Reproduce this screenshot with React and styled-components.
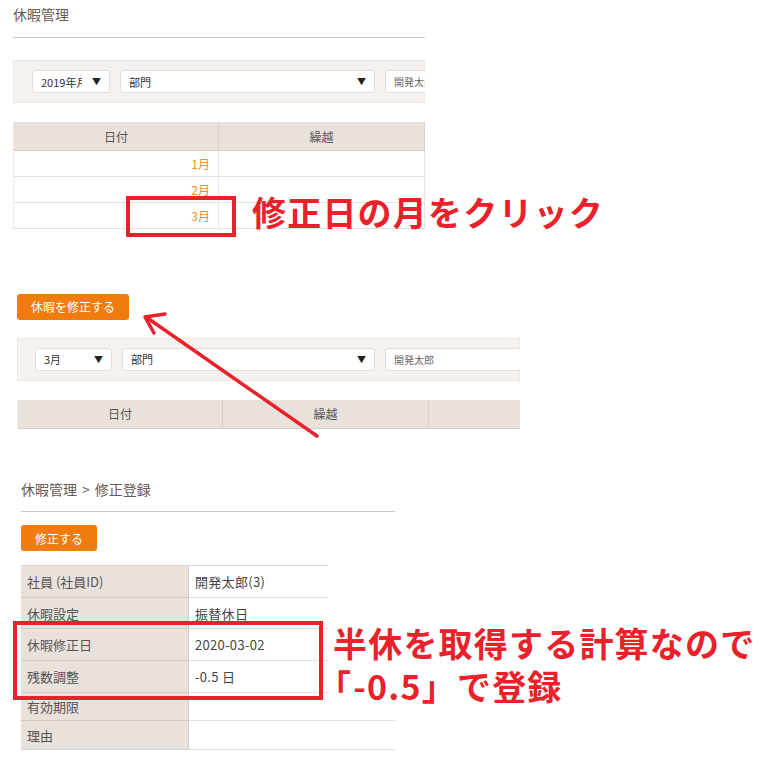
import styled, { createGlobalStyle } from "styled-components";

const GlobalStyle = createGlobalStyle`
  body {
    margin: 0;
    background: #fff;
    font-family: "Noto Sans CJK JP", "Noto Sans", sans-serif;
    color: #555;
  }
`;

const Page = styled.div`
  position: relative;
  width: 768px;
  height: 759px;
  overflow: hidden;
  background: #fff;
`;

const Shot = styled.section`
  margin-left: ${(p) => p.$left}px;
  margin-top: ${(p) => p.$top}px;
  width: ${(p) => p.$width}px;
  height: ${(p) => p.$height}px;
  overflow: hidden;
`;

const PageTitle = styled.div`
  height: ${(p) => p.$h}px;
  line-height: ${(p) => p.$lh}px;
  border-bottom: 1px solid #cfc7c1;
  font-size: 14px;
  color: #6a5b50;
  white-space: nowrap;
`;

const Sep = styled.span`
  margin: 0 5px;
`;

const OrangeButton = styled.div`
  display: inline-flex;
  align-items: center;
  justify-content: center;
  box-sizing: border-box;
  width: ${(p) => p.$w}px;
  height: 26px;
  margin-top: ${(p) => p.$top || 0}px;
  background: #f07c10;
  border-radius: 3px;
  color: #fff;
  font-size: 12px;
`;

const FilterBar = styled.div`
  display: flex;
  align-items: center;
  gap: 10px;
  box-sizing: border-box;
  height: 43px;
  margin-top: ${(p) => p.$top}px;
  padding-left: ${(p) => p.$pad}px;
  background: #f4f1ee;
  border: 1px solid #ece7e3;
  white-space: nowrap;
`;

const Select = styled.div`
  display: flex;
  align-items: center;
  flex-shrink: 0;
  box-sizing: border-box;
  width: ${(p) => p.$w}px;
  height: 23px;
  padding: 0 8px;
  background: #fff;
  border: 1px solid #e4deda;
  border-radius: 3px;
  font-size: 11px;
  color: #333;
`;

const SelectText = styled.span`
  flex: 1;
  min-width: 0;
  overflow: hidden;
  white-space: nowrap;
  color: ${(p) => (p.$muted ? "#666" : "#333")};
  font-size: ${(p) => (p.$muted ? 10 : 11)}px;
`;

const Caret = styled.span`
  margin-left: 10px;
  font-size: 9px;
  color: #222;
`;

const MonthTable = styled.div`
  display: grid;
  grid-template-columns: 205px 206px 206px;
  margin-top: 19px;
  border-left: 1px solid #eee9e5;
`;

const HeadCell = styled.div`
  display: flex;
  align-items: center;
  justify-content: center;
  height: 29px;
  box-sizing: border-box;
  background: #e9e1dc;
  border-right: 1px solid #d9d0ca;
  border-bottom: 1px solid #d9d0ca;
  font-size: 12px;
  color: #555;
`;

const BodyCell = styled.div`
  display: flex;
  align-items: center;
  justify-content: flex-end;
  height: 26px;
  box-sizing: border-box;
  padding-right: 8px;
  border-right: 1px solid #ebe5e1;
  border-bottom: 1px solid #e6e0dc;
  font-size: 12px;
  color: #f08a2c;
`;

const DetailTable = styled.div`
  display: grid;
  grid-template-columns: 168px 206px;
  margin-top: 14px;
  border-top: 1px solid #ddd5cf;
`;

const LabelCell = styled.div`
  display: flex;
  align-items: center;
  box-sizing: border-box;
  height: ${(p) => p.$h}px;
  padding-left: 6px;
  background: #e9e1dc;
  border-right: 1px solid #d6ccc5;
  border-bottom: 1px solid #d6ccc5;
  font-size: 13px;
  color: #555;
`;

const ValueCell = styled.div`
  display: flex;
  align-items: center;
  box-sizing: border-box;
  height: ${(p) => p.$h}px;
  padding-left: 6px;
  border-bottom: 1px solid #e4ddd8;
  font-size: 13px;
  letter-spacing: 0.3px;
  color: #444;
`;

const Mark = styled.div`
  position: absolute;
  left: ${(p) => p.$x}px;
  top: ${(p) => p.$y}px;
  width: ${(p) => p.$w}px;
  height: ${(p) => p.$h}px;
  box-sizing: border-box;
  border: 4px solid #e8212b;
`;

const Note = styled.div`
  position: absolute;
  left: ${(p) => p.$x}px;
  top: ${(p) => p.$y}px;
  box-sizing: border-box;
  padding: ${(p) => p.$pad || "0"};
  background: ${(p) => (p.$cover ? "#fff" : "transparent")};
  width: ${(p) => (p.$w ? `${p.$w}px` : "auto")};
  height: ${(p) => (p.$h ? `${p.$h}px` : "auto")};
  font-size: 34px;
  font-weight: 700;
  line-height: 43px;
  letter-spacing: 1.2px;
  color: #e8212b;
  white-space: nowrap;
`;

const OpenBracket = styled.span`
  margin-left: -16px;
  margin-right: 1px;
`;

const Arrow = styled.svg`
  position: absolute;
  left: 0;
  top: 0;
  pointer-events: none;
`;

const details = [
  ["社員 (社員ID)", "開発太郎(3)", 32],
  ["休暇設定", "振替休日", 31],
  ["休暇修正日", "2020-03-02", 32],
  ["残数調整", "-0.5 日", 32],
  ["有効期限", "", 28],
  ["理由", "", 29],
];

function Filters({ top, pad, first, widths }) {
  return (
    <FilterBar $top={top} $pad={pad}>
      <Select $w={widths[0]}>
        <SelectText>{first}</SelectText>
        <Caret>▼</Caret>
      </Select>
      <Select $w={widths[1]}>
        <SelectText>部門</SelectText>
        <Caret>▼</Caret>
      </Select>
      <Select $w={150}>
        <SelectText $muted>開発太郎</SelectText>
      </Select>
    </FilterBar>
  );
}

function App() {
  return (
    <Page>
      <GlobalStyle />

      <Shot $left={13} $top={0} $width={412} $height={232}>
        <PageTitle $h={37} $lh={28}>休暇管理</PageTitle>
        <Filters top={22} pad={18} first="2019年月" widths={[78, 255]} />
        <MonthTable>
          <HeadCell>日付</HeadCell>
          <HeadCell>繰越</HeadCell>
          <HeadCell />
          {["1月", "2月", "3月"].map((m) => [
            <BodyCell key={m}>{m}</BodyCell>,
            <BodyCell key={m + "b"} />,
            <BodyCell key={m + "c"} />,
          ])}
        </MonthTable>
      </Shot>

      <Shot $left={17} $top={61} $width={503} $height={137}>
        <OrangeButton $w={112}>休暇を修正する</OrangeButton>
        <Filters top={18} pad={17} first="3月" widths={[77, 253]} />
        <MonthTable>
          <HeadCell>日付</HeadCell>
          <HeadCell>繰越</HeadCell>
          <HeadCell />
        </MonthTable>
      </Shot>

      <Shot $left={21} $top={42} $width={374} $height={287}>
        <PageTitle $h={39} $lh={34}>
          休暇管理<Sep>&gt;</Sep>修正登録
        </PageTitle>
        <OrangeButton $w={76} $top={13}>修正する</OrangeButton>
        <DetailTable>
          {details.map(([label, value, h]) => [
            <LabelCell key={label} $h={h}>{label}</LabelCell>,
            <ValueCell key={label + "v"} $h={h}>{value}</ValueCell>,
          ])}
        </DetailTable>
      </Shot>

      <Mark $x={126} $y={196} $w={110} $h={41} />
      <Note $x={252} $y={190}>修正日の月をクリック</Note>

      <Mark $x={13} $y={621} $w={310} $h={79} />
      <Note $x={328} $y={562} $w={440} $h={146} $cover $pad="59px 0 0 5px">
        半休を取得する計算なので
        <br />
        <OpenBracket>「</OpenBracket>-0.5」で登録
      </Note>

      <Arrow width="768" height="759" viewBox="0 0 768 759">
        <g stroke="#e8212b" strokeWidth="3.5" strokeLinecap="round" strokeLinejoin="round" fill="none">
          <path d="M317 436 L146 317" />
          <path d="M165 314 L145 317 L154 333" />
        </g>
      </Arrow>
    </Page>
  );
}

export default App;
